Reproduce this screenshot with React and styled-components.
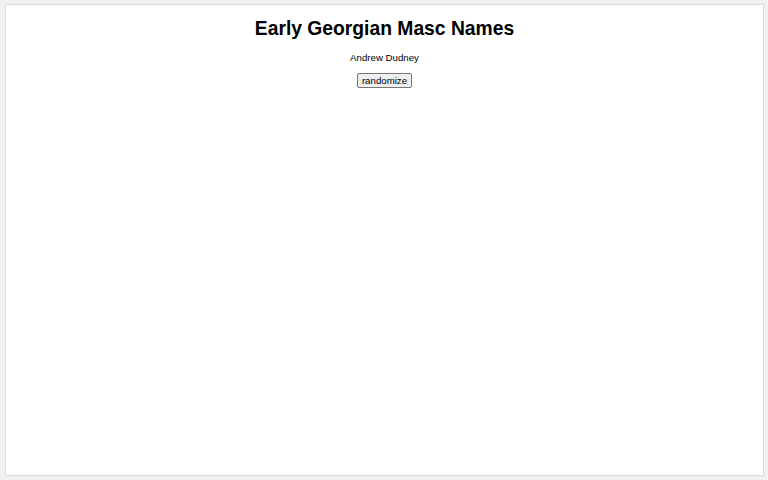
import React from 'react';
import styled, { createGlobalStyle } from 'styled-components';

const GlobalStyle = createGlobalStyle`
    html, body {
        margin: 0;
        padding: 0;
        background-color: #f1f1f1;
        font-family: "Liberation Sans", Arial, sans-serif;
    }
`;

const Page = styled.div`
    height: 480px;
    padding: 4px 4px 4px 5px;
    box-sizing: border-box;
    display: flex;
`;

const Card = styled.main`
    flex: 1;
    background-color: white;
    border: 1px solid #dcdcdc;
    display: flex;
    flex-flow: column;
    align-items: center;
`;

const Title = styled.h1`
    margin: 12px 0 0;
    font-size: 19.3px;
    font-weight: bold;
    color: black;
    line-height: 24px;
`;

const Author = styled.div`
    margin-top: 11px;
    font-size: 9.7px;
    line-height: 12px;
    color: black;
`;

const RandomButton = styled.button`
    margin-top: 9px;
    font-family: "Liberation Sans", Arial, sans-serif;
    font-size: 9.7px;
    padding: 1px 4px;
    height: 15px;
    line-height: 11px;
    background-color: #efefef;
    border: 1px solid #767676;
    border-radius: 2px;
    color: black;
`;

export default function App()
{
    return (
        <>
            <GlobalStyle />
            <Page>
                <Card>
                    <Title>Early Georgian Masc Names</Title>
                    <Author>Andrew Dudney</Author>
                    <RandomButton>randomize</RandomButton>
                </Card>
            </Page>
        </>
    );
}
